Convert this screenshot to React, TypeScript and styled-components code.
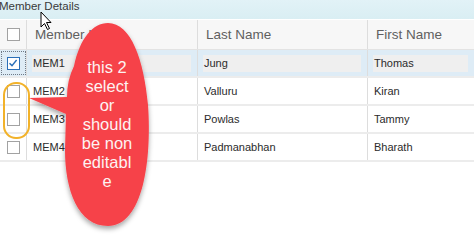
import styled, { createGlobalStyle } from 'styled-components';

const GlobalStyle = createGlobalStyle`
  html, body {
    margin: 0;
    padding: 0;
    background: #ffffff;
    font-family: "Liberation Sans", Arial, sans-serif;
  }
`;

type Member = { id: string; last: string; first: string; selected?: boolean };

const members: Member[] = [
  { id: 'MEM1', last: 'Jung', first: 'Thomas', selected: true },
  { id: 'MEM2', last: 'Valluru', first: 'Kiran' },
  { id: 'MEM3', last: 'Powlas', first: 'Tammy' },
  { id: 'MEM4', last: 'Padmanabhan', first: 'Bharath' },
];

export default function App() {
  return (
    <>
      <GlobalStyle />
      <Page>
        <TitleBar>Member Details</TitleBar>
        <Table>
          <HeaderRow>
            <CheckCell>
              <CheckBox />
            </CheckCell>
            <HeaderCell>Member ID</HeaderCell>
            <HeaderCell>Last Name</HeaderCell>
            <HeaderCell>First Name</HeaderCell>
          </HeaderRow>
          {members.map((m) => (
            <Row key={m.id} $selected={m.selected}>
              <CheckCell $focused={m.selected}>
                <CheckBox $checked={m.selected}>
                  {m.selected && (
                    <svg width="10" height="10" viewBox="0 0 10 10">
                      <path d="M1.5 5.2 L4 7.6 L8.6 2" fill="none" stroke="#2a6fb8" strokeWidth="1.4" />
                    </svg>
                  )}
                </CheckBox>
              </CheckCell>
              <Cell>{m.selected ? <ReadOnlyBox>{m.id}</ReadOnlyBox> : m.id}</Cell>
              <Cell>{m.selected ? <ReadOnlyBox>{m.last}</ReadOnlyBox> : m.last}</Cell>
              <Cell>{m.selected ? <ReadOnlyBox>{m.first}</ReadOnlyBox> : m.first}</Cell>
            </Row>
          ))}
        </Table>

        <Annotation width="474" height="235" viewBox="0 0 474 235">
          <defs>
            <filter id="shadow" x="-30%" y="-10%" width="160%" height="130%">
              <feDropShadow dx="0" dy="3" stdDeviation="2.5" floodColor="#000" floodOpacity="0.35" />
            </filter>
          </defs>
          <rect x="4" y="83" width="25" height="55" rx="12" ry="12" fill="none" stroke="#f2b22a" strokeWidth="2" />
          <g filter="url(#shadow)">
            <path
              d="M108 23 C131 23 144 60 148 105 C152 160 143 226 108 226 C78 226 65 190 65 150 L66 114 L29 98 L67 97 Q67 80 74 66 C80 38 93 23 108 23 Z"
              fill="#f6424a"
            />
          </g>
          <path
            d="M41 12 L41 27 L44.5 23.5 L47.5 29.5 L49.5 28.5 L46.5 22.5 L51 22.5 Z"
            fill="#ffffff"
            stroke="#000000"
            strokeWidth="1"
            strokeLinejoin="round"
          />
        </Annotation>
        <BubbleText>
          this 2
          <br />
          select
          <br />
          or
          <br />
          should
          <br />
          be non
          <br />
          editabl
          <br />e
        </BubbleText>
      </Page>
    </>
  );
}

const Page = styled.div`
  position: relative;
  width: 474px;
  height: 235px;
  overflow: hidden;
  background: #ffffff;
`;

const TitleBar = styled.div`
  height: 19px;
  margin-left: -1px;
  background: linear-gradient(#e2f2f7, #d9eef3);
  color: #3a3a3a;
  font-size: 11.5px;
  line-height: 12px;
  border-bottom: 1px solid #ffffff;
`;

const Table = styled.div`
  display: flex;
  flex-direction: column;
`;

const columns = '27px 171px 170px 1fr';

const HeaderRow = styled.div`
  display: grid;
  grid-template-columns: ${columns};
  height: 29px;
  background: #f7f7f7;
  border-bottom: 1px solid #e3e3e3;
`;

const Row = styled.div<{ $selected?: boolean }>`
  display: grid;
  grid-template-columns: ${columns};
  height: 26px;
  background: ${(p) => (p.$selected ? '#deecf6' : '#ffffff')};
  border-bottom: 2px solid #ececec;
`;

const CheckCell = styled.div<{ $focused?: boolean }>`
  display: flex;
  align-items: center;
  justify-content: center;
  border-right: 1px solid #dddddd;
  box-sizing: border-box;
  outline: ${(p) => (p.$focused ? '1px dotted #6f7a86' : 'none')};
  outline-offset: -2px;
`;

const CheckBox = styled.div<{ $checked?: boolean }>`
  width: 13px;
  height: 13px;
  box-sizing: border-box;
  background: #ffffff;
  border: 1px solid ${(p) => (p.$checked ? '#2a6fb8' : '#a2a2a2')};
  display: flex;
  align-items: center;
  justify-content: center;
`;

const HeaderCell = styled.div`
  display: flex;
  align-items: center;
  padding-left: 8px;
  color: #5f5f5f;
  font-size: 13.5px;
  border-right: 1px solid #dddddd;
  &:last-child {
    border-right: none;
  }
`;

const Cell = styled.div`
  display: flex;
  align-items: center;
  padding-left: 6px;
  color: #2b2b2b;
  font-size: 11px;
  border-right: 1px solid #dddddd;
  &:last-child {
    border-right: none;
  }
`;

const ReadOnlyBox = styled.div`
  flex: 1;
  margin: 0 6px 0 -1px;
  height: 17px;
  padding-left: 1px;
  display: flex;
  align-items: center;
  background: #efefef;
`;

const Annotation = styled.svg`
  position: absolute;
  left: 0;
  top: 0;
  pointer-events: none;
`;

const BubbleText = styled.div`
  position: absolute;
  left: 68px;
  top: 58px;
  width: 78px;
  text-align: center;
  color: #fdf2f2;
  font-size: 16.5px;
  line-height: 19px;
`;
